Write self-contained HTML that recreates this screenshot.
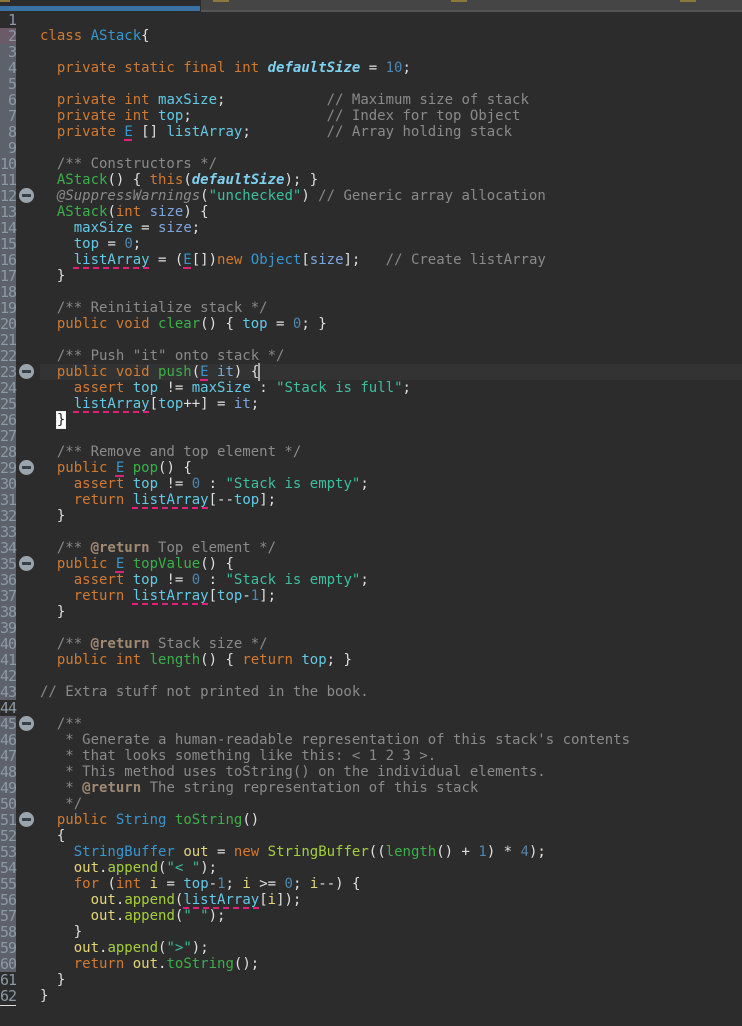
<!DOCTYPE html>
<html><head><meta charset="utf-8"><style>
html,body{margin:0;padding:0;background:#2c2c2c;width:742px;height:1026px;overflow:hidden}
#top{position:absolute;left:0;top:0;width:742px;height:11px;background:#2c2c2c}
#blue{position:absolute;left:0;top:6px;width:200px;height:5px;background:#3b72a6}
#tabs{position:absolute;left:201px;top:0;width:541px;height:10px;background:#454545;border-bottom:2px solid #555}
.gm{position:absolute;top:0;height:2px;width:16px;background:#8c7a3c}
#gut{position:absolute;left:0;top:28px;width:16px;height:944px;background:#5c616b}
#g2{position:absolute;left:0;top:28px;width:16px;height:16px;background:#6b5a68}
#g44{position:absolute;left:0;top:700px;width:16px;height:16px;background:#2c2c2c}
#nums{position:absolute;left:0;top:12px;width:16px;font:15px/16px "DejaVu Sans Mono",monospace;color:#8c9aa6;white-space:pre;letter-spacing:-1px}
#cur{position:absolute;left:40px;top:364px;width:702px;height:16px;background:#333333}
.fold{position:absolute;left:19px;width:15px;height:15px;border-radius:50%;background:#9aa4ad}
.fold::after{content:"";position:absolute;left:3px;top:6px;width:9px;height:3px;background:#3a3f45}
#code{position:absolute;left:40px;top:12px;font:14px/16px "DejaVu Sans Mono",monospace;color:#e0e0e0;white-space:pre}
.k{color:#d07a33}.f{color:#63c9e6}.c{color:#3797d0}.m{color:#3bb04a}.a{color:#a4cf3c}.v{color:#e3d67a}
.s{color:#3dbf9e}.n{color:#4f86b0}.cm{color:#8a8a8a}.p{color:#7fa6dc}.an{color:#8a8a8a;font-style:italic}
.b{font-weight:bold;font-style:italic;color:#7fd0ee}.tg{color:#a08a74;font-weight:bold}
.u{text-decoration:underline dashed #e0207a 2px;text-underline-offset:3px}
.cb{outline:1px solid #eee;background:#fff;color:#222}
</style></head><body>
<div id="top"></div><div id="blue"></div><div id="tabs"></div>
<div class="gm" style="left:0;width:10px"></div><div class="gm" style="left:213px"></div><div class="gm" style="left:451px"></div><div class="gm" style="left:680px"></div>
<div id="gut"></div><div id="g2"></div><div id="g44"></div>
<div id="cur"></div>
<div id="nums"> 1
 2
 3
 4
 5
 6
 7
 8
 9
10
11
12
13
14
15
16
17
18
19
20
21
22
23
24
25
26
27
28
29
30
31
32
33
34
35
36
37
38
39
40
41
42
43
44
45
46
47
48
49
50
51
52
53
54
55
56
57
58
59
60
61
<span style="border-bottom:1px solid #ddd">62</span></div>
<div class="fold" style="top:188px"></div>
<div class="fold" style="top:364px"></div>
<div class="fold" style="top:460px"></div>
<div class="fold" style="top:556px"></div>
<div class="fold" style="top:716px"></div>
<div class="fold" style="top:812px"></div>
<div id="code">
<span class="k">class</span> <span class="c">AStack</span>{

  <span class="k">private static final int</span> <span class="b">defaultSize</span> = <span class="n">10</span>;

  <span class="k">private int</span> <span class="f">maxSize</span>;            <span class="cm">// Maximum size of stack</span>
  <span class="k">private int</span> <span class="f">top</span>;                <span class="cm">// Index for top Object</span>
  <span class="k">private</span> <span class="c u">E</span> [] <span class="f">listArray</span>;         <span class="cm">// Array holding stack</span>

  <span class="cm">/** Constructors */</span>
  <span class="m">AStack</span>() { <span class="k">this</span>(<span class="b">defaultSize</span>); }
  <span class="an">@SuppressWarnings</span>(<span class="s">"unchecked"</span>) <span class="cm">// Generic array allocation</span>
  <span class="m">AStack</span>(<span class="k">int</span> <span class="p">size</span>) {
    <span class="f">maxSize</span> = <span class="p">size</span>;
    <span class="f">top</span> = <span class="n">0</span>;
    <span class="f u">listArray</span> = (<span class="c u">E</span>[])<span class="k">new</span> <span class="c">Object</span>[<span class="p">size</span>];   <span class="cm">// Create listArray</span>
  }

  <span class="cm">/** Reinitialize stack */</span>
  <span class="k">public void</span> <span class="m">clear</span>() { <span class="f">top</span> = <span class="n">0</span>; }

  <span class="cm">/** Push "it" onto stack */</span>
  <span class="k">public void</span> <span class="m">push</span>(<span class="c u">E</span> <span class="p">it</span>) {<span style="outline:1px solid #aaa">&#8203;</span>
    <span class="k">assert</span> <span class="f">top</span> != <span class="f">maxSize</span> : <span class="s">"Stack is full"</span>;
    <span class="f u">listArray</span>[<span class="f">top</span>++] = <span class="p">it</span>;
  <span class="cb">}</span>

  <span class="cm">/** Remove and top element */</span>
  <span class="k">public</span> <span class="c u">E</span> <span class="m">pop</span>() {
    <span class="k">assert</span> <span class="f">top</span> != <span class="n">0</span> : <span class="s">"Stack is empty"</span>;
    <span class="k">return</span> <span class="f u">listArray</span>[--<span class="f">top</span>];
  }

  <span class="cm">/** <span class="tg">@return</span> Top element */</span>
  <span class="k">public</span> <span class="c u">E</span> <span class="m">topValue</span>() {
    <span class="k">assert</span> <span class="f">top</span> != <span class="n">0</span> : <span class="s">"Stack is empty"</span>;
    <span class="k">return</span> <span class="f u">listArray</span>[<span class="f">top</span>-<span class="n">1</span>];
  }

  <span class="cm">/** <span class="tg">@return</span> Stack size */</span>
  <span class="k">public int</span> <span class="m">length</span>() { <span class="k">return</span> <span class="f">top</span>; }

<span class="cm">// Extra stuff not printed in the book.</span>

  <span class="cm">/**</span>
<span class="cm">   * Generate a human-readable representation of this stack's contents</span>
<span class="cm">   * that looks something like this: &lt; 1 2 3 &gt;.</span>
<span class="cm">   * This method uses toString() on the individual elements.</span>
<span class="cm">   * <span class="tg">@return</span> The string representation of this stack</span>
<span class="cm">   */</span>
  <span class="k">public</span> <span class="c">String</span> <span class="m">toString</span>()
  {
    <span class="c">StringBuffer</span> <span class="v">out</span> = <span class="k">new</span> <span class="a">StringBuffer</span>((<span class="m">length</span>() + <span class="n">1</span>) * <span class="n">4</span>);
    <span class="v">out</span>.<span class="a">append</span>(<span class="s">"&lt; "</span>);
    <span class="k">for</span> (<span class="k">int</span> <span class="v">i</span> = <span class="f">top</span>-<span class="n">1</span>; <span class="v">i</span> &gt;= <span class="n">0</span>; <span class="v">i</span>--) {
      <span class="v">out</span>.<span class="a">append</span>(<span class="f u">listArray</span>[<span class="v">i</span>]);
      <span class="v">out</span>.<span class="a">append</span>(<span class="s">" "</span>);
    }
    <span class="v">out</span>.<span class="a">append</span>(<span class="s">"&gt;"</span>);
    <span class="k">return</span> <span class="v">out</span>.<span class="m">toString</span>();
  }
}
</div>
</body></html>
